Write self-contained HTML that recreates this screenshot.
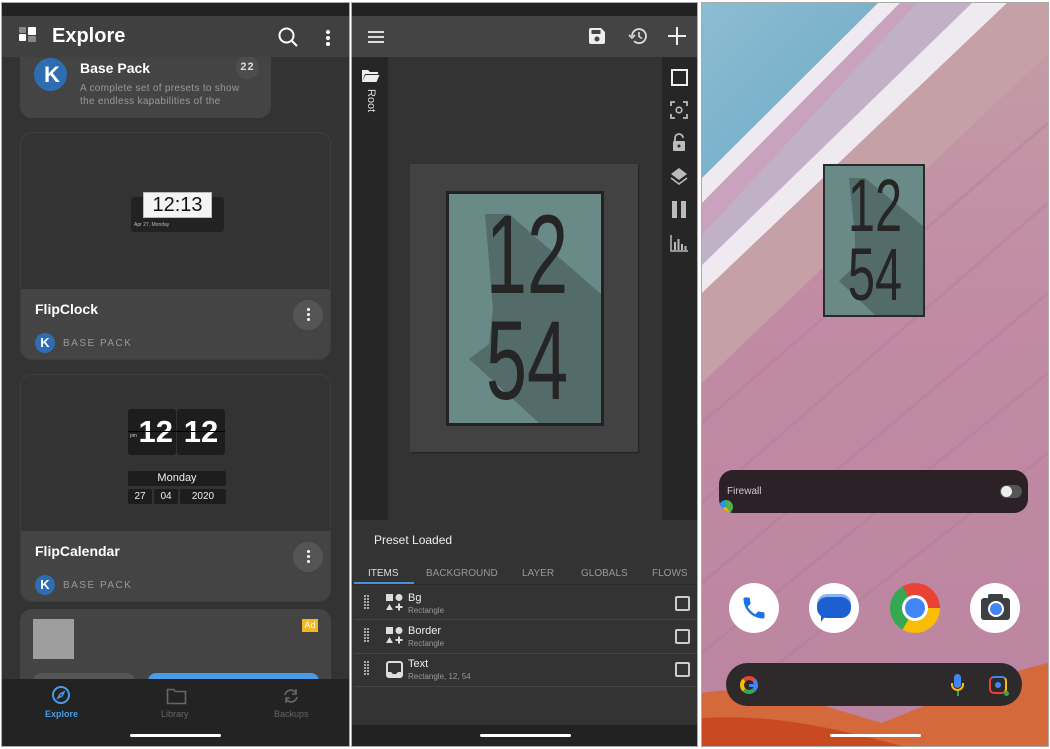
<!DOCTYPE html>
<html><head><meta charset="utf-8">
<style>
*{box-sizing:border-box;margin:0;padding:0}
body{width:1050px;height:749px;background:#fff;position:relative;overflow:hidden;font-family:"Liberation Sans",sans-serif}
.a{position:absolute}
.panel{position:absolute;top:3px;height:743px;overflow:hidden}
.t{position:absolute;white-space:nowrap}
</style></head><body>

<div class="a" style="left:1px;top:2px;width:349px;height:745px;border:1px solid #aaa"></div>
<div class="a" style="left:351px;top:2px;width:347px;height:745px;border:1px solid #aaa"></div>
<div class="a" style="left:701px;top:2px;width:348px;height:745px;border:1px solid #aaa"></div>

<!-- LEFT PANEL -->
<div class="panel" style="left:2px;width:347px;background:#333">
  <div class="a" style="left:0;top:0;width:347px;height:13px;background:#222"></div>
  <div class="a" style="left:18px;top:40px;width:251px;height:75px;background:#444;border-radius:12px"></div>
  <div class="a" style="left:0;top:13px;width:347px;height:41px;background:#404040;z-index:2">
    <div class="a" style="left:17px;top:18px;width:7px;height:7px;background:#fff;border-radius:1px"></div>
    <div class="a" style="left:17px;top:11px;width:7px;height:6px;background:#888;border-radius:1px"></div>
    <div class="a" style="left:26px;top:11px;width:8px;height:8px;background:#fff;border-radius:1px"></div>
    <div class="a" style="left:26px;top:20px;width:8px;height:6px;background:#888;border-radius:1px"></div>
    <div class="t" style="left:50px;top:9px;font-size:20px;font-weight:bold;color:#fff">Explore</div>
    <svg class="a" style="left:275px;top:10px" width="22" height="22" viewBox="0 0 22 22"><circle cx="9.5" cy="9.5" r="7" fill="none" stroke="#fff" stroke-width="2"/><line x1="14.5" y1="14.5" x2="20" y2="20" stroke="#fff" stroke-width="2"/></svg>
    <div class="a" style="left:324px;top:14px;width:4px;height:4px;border-radius:2px;background:#fff;box-shadow:0 6px 0 #fff,0 12px 0 #fff"></div>
  </div>
  <div class="a" style="left:32px;top:55px;width:33px;height:33px;border-radius:50%;background:#2f6db3"></div>
  <div class="t" style="left:42px;top:59px;font-size:22px;font-weight:bold;color:#fff">K</div>
  <div class="t" style="left:78px;top:57px;font-size:14px;font-weight:bold;color:#fff">Base Pack</div>
  <div class="a" style="left:234px;top:53px;width:23px;height:23px;border-radius:50%;background:#4d4d4d;color:#ddd;font-size:11px;font-weight:bold;text-align:center;line-height:23px;letter-spacing:1px">22</div>
  <div class="t" style="left:78px;top:79px;font-size:10px;color:#999;line-height:13px;letter-spacing:.3px">A complete set of presets to show<br>the endless kapabilities of the</div>

  <div class="a" style="left:18px;top:129px;width:311px;height:228px;border-radius:12px;overflow:hidden;background:#333;border:1px solid #3e3e3e">
    <div class="a" style="left:0;top:156px;width:311px;height:72px;background:#444"></div>
    <div class="a" style="left:110px;top:64px;width:93px;height:35px;background:#222;border-radius:3px"></div>
    <div class="a" style="left:122px;top:59px;width:69px;height:26px;background:#f4f4f4;border:1px solid #bbb;font-size:20px;color:#111;text-align:center;line-height:25px">12:13</div>
    <div class="t" style="left:113px;top:89px;font-size:5px;color:#bbb">Apr 27, Monday</div>
    <div class="t" style="left:14px;top:168px;font-size:14px;font-weight:bold;color:#fff">FlipClock</div>
    <div class="a" style="left:272px;top:167px;width:30px;height:30px;border-radius:50%;background:#555"></div>
    <div class="a" style="left:286px;top:175px;width:3px;height:3px;border-radius:2px;background:#fff;box-shadow:0 5px 0 #fff,0 10px 0 #fff"></div>
    <div class="a" style="left:14px;top:200px;width:20px;height:20px;border-radius:50%;background:#2f6db3;color:#fff;font-size:13px;font-weight:bold;text-align:center;line-height:20px">K</div>
    <div class="t" style="left:42px;top:205px;font-size:10px;color:#999;letter-spacing:1.5px">BASE PACK</div>
  </div>

  <div class="a" style="left:18px;top:371px;width:311px;height:228px;border-radius:12px;overflow:hidden;background:#333;border:1px solid #3e3e3e">
    <div class="a" style="left:0;top:156px;width:311px;height:72px;background:#444"></div>
    <div class="a" style="left:107px;top:34px;width:48px;height:46px;background:#1d1d1d;border-radius:3px;color:#fff;font-size:31px;font-weight:bold;text-align:right;padding-right:3px;line-height:46px">12</div>
    <div class="t" style="left:109px;top:58px;font-size:5px;color:#ccc">pm</div>
    <div class="a" style="left:156px;top:34px;width:48px;height:46px;background:#1d1d1d;border-radius:3px;color:#fff;font-size:31px;font-weight:bold;text-align:center;line-height:46px">12</div>
    <div class="a" style="left:107px;top:56px;width:97px;height:1px;background:#000"></div>
    <div class="a" style="left:107px;top:96px;width:98px;height:15px;background:#1d1d1d;border-radius:2px;color:#eee;font-size:11px;text-align:center;line-height:15px">Monday</div>
    <div class="a" style="left:107px;top:114px;width:24px;height:15px;background:#1d1d1d;border-radius:2px;color:#eee;font-size:10px;text-align:center;line-height:15px">27</div>
    <div class="a" style="left:133px;top:114px;width:24px;height:15px;background:#1d1d1d;border-radius:2px;color:#eee;font-size:10px;text-align:center;line-height:15px">04</div>
    <div class="a" style="left:159px;top:114px;width:46px;height:15px;background:#1d1d1d;border-radius:2px;color:#eee;font-size:10px;text-align:center;line-height:15px">2020</div>
    <div class="t" style="left:14px;top:168px;font-size:14px;font-weight:bold;color:#fff">FlipCalendar</div>
    <div class="a" style="left:272px;top:167px;width:30px;height:30px;border-radius:50%;background:#555"></div>
    <div class="a" style="left:286px;top:175px;width:3px;height:3px;border-radius:2px;background:#fff;box-shadow:0 5px 0 #fff,0 10px 0 #fff"></div>
    <div class="a" style="left:14px;top:200px;width:20px;height:20px;border-radius:50%;background:#2f6db3;color:#fff;font-size:13px;font-weight:bold;text-align:center;line-height:20px">K</div>
    <div class="t" style="left:42px;top:205px;font-size:10px;color:#999;letter-spacing:1.5px">BASE PACK</div>
  </div>

  <div class="a" style="left:18px;top:606px;width:311px;height:100px;border-radius:12px;background:#444"></div>
  <div class="a" style="left:31px;top:616px;width:41px;height:40px;background:#9e9e9e"></div>
  <div class="a" style="left:300px;top:616px;width:16px;height:13px;background:#f2b824;color:#fff;font-size:9px;text-align:center;line-height:13px">Ad</div>
  <div class="a" style="left:31px;top:670px;width:102px;height:20px;background:#555;border-radius:8px"></div>
  <div class="a" style="left:146px;top:670px;width:171px;height:20px;background:#4a9be8;border-radius:8px"></div>

  <div class="a" style="left:0;top:676px;width:347px;height:67px;background:#232323"></div>
  <svg class="a" style="left:49px;top:682px" width="20" height="20" viewBox="0 0 20 20"><circle cx="10" cy="10" r="8" fill="none" stroke="#4a9be8" stroke-width="2"/><path d="M13 7 L11 11 L7 13 L9 9 Z" fill="none" stroke="#4a9be8" stroke-width="1.5"/></svg>
  <div class="t" style="left:43px;top:706px;font-size:9px;font-weight:bold;color:#4a9be8">Explore</div>
  <svg class="a" style="left:164px;top:684px" width="21" height="18" viewBox="0 0 21 18"><path d="M1.5 2.5 h6 l2 2 h10 v12 h-18 z" fill="none" stroke="#666" stroke-width="1.6"/></svg>
  <div class="t" style="left:159px;top:706px;font-size:9px;color:#666">Library</div>
  <svg class="a" style="left:279px;top:684px" width="20" height="18" viewBox="0 0 20 18"><path d="M4 8 A6 6 0 0 1 15 6 M16 10 A6 6 0 0 1 5 12" fill="none" stroke="#666" stroke-width="1.8"/><path d="M15 2 v5 h-4" fill="none" stroke="#666" stroke-width="1.6"/><path d="M5 16 v-5 h4" fill="none" stroke="#666" stroke-width="1.6"/></svg>
  <div class="t" style="left:272px;top:706px;font-size:9px;color:#666">Backups</div>
  <div class="a" style="left:128px;top:731px;width:91px;height:3px;border-radius:2px;background:#fff"></div>
</div>

<!-- MIDDLE PANEL -->
<div class="panel" style="left:352px;width:345px;background:#333">
  <div class="a" style="left:0;top:0;width:345px;height:13px;background:#222"></div>
  <div class="a" style="left:0;top:13px;width:345px;height:41px;background:#444"></div>
  <div class="a" style="left:16px;top:28px;width:16px;height:2px;background:#ddd;box-shadow:0 5px 0 #ddd,0 10px 0 #ddd"></div>
  <svg class="a" style="left:236px;top:24px" width="18" height="18" viewBox="0 0 18 18"><path d="M1 3 a2 2 0 0 1 2-2 h10 l4 4 v10 a2 2 0 0 1 -2 2 h-12 a2 2 0 0 1 -2-2 z" fill="#eee"/><rect x="3.5" y="3" width="9" height="4" fill="#444"/><circle cx="9" cy="12" r="2.5" fill="#444"/></svg>
  <svg class="a" style="left:276px;top:24px" width="20" height="18" viewBox="0 0 20 18"><path d="M4 9 A7 7 0 1 1 6 14" fill="none" stroke="#ddd" stroke-width="1.8"/><path d="M1 8 l3 3 l3-3" fill="none" stroke="#ddd" stroke-width="1.6"/><path d="M11 5 v4.5 l3 2" fill="none" stroke="#ddd" stroke-width="1.6"/></svg>
  <div class="a" style="left:316px;top:32px;width:18px;height:2px;background:#eee"></div>
  <div class="a" style="left:324px;top:24px;width:2px;height:18px;background:#eee"></div>

  <div class="a" style="left:0;top:54px;width:36px;height:463px;background:#262626"></div>
  <svg class="a" style="left:10px;top:66px" width="18" height="14" viewBox="0 0 18 14"><path d="M0 1 h6 l2 2 h8 v2 h-13 l-3 8 z" fill="#eee"/><path d="M3.5 6 h14 l-3 7 h-14.5 z" fill="#eee"/></svg>
  <div class="t" style="top:86px;font-size:11px;color:#ddd;transform:rotate(90deg);transform-origin:0 0;left:25px">Root</div>
  <div class="a" style="left:310px;top:54px;width:35px;height:463px;background:#262626"></div>
  <div class="a" style="left:319px;top:66px;width:17px;height:17px;border:2px solid #eee"></div>
  <svg class="a" style="left:318px;top:98px" width="18" height="18" viewBox="0 0 18 18"><path d="M1 5 v-4 h4 M13 1 h4 v4 M17 13 v4 h-4 M5 17 h-4 v-4" fill="none" stroke="#bbb" stroke-width="1.8"/><circle cx="9" cy="9" r="2.8" fill="none" stroke="#bbb" stroke-width="1.6"/></svg>
  <svg class="a" style="left:320px;top:130px" width="14" height="18" viewBox="0 0 14 18"><path d="M3 8 v-3 a4 4 0 0 1 8 0" fill="none" stroke="#bbb" stroke-width="1.8"/><rect x="1" y="8" width="12" height="10" rx="1" fill="#bbb"/><circle cx="7" cy="13" r="1.5" fill="#262626"/></svg>
  <svg class="a" style="left:318px;top:164px" width="18" height="18" viewBox="0 0 18 18"><path d="M9 1 l8 6 l-8 6 l-8-6 z" fill="#bbb"/><path d="M1 11 l8 6 l8-6" fill="none" stroke="#bbb" stroke-width="1.6"/></svg>
  <div class="a" style="left:320px;top:198px;width:5px;height:17px;background:#bbb"></div>
  <div class="a" style="left:329px;top:198px;width:5px;height:17px;background:#bbb"></div>
  <svg class="a" style="left:318px;top:232px" width="18" height="17" viewBox="0 0 18 17"><path d="M1 0 v16 h17" fill="none" stroke="#bbb" stroke-width="1.5"/><rect x="4" y="7" width="2" height="8" fill="#bbb"/><rect x="7.5" y="4" width="2" height="11" fill="#bbb"/><rect x="11" y="9" width="2" height="6" fill="#bbb"/><rect x="14.5" y="11" width="2" height="4" fill="#bbb"/></svg>

  <div class="a" style="left:58px;top:161px;width:228px;height:288px;background:#424242;box-shadow:1px 1px 1px #222"></div>
  <div class="a" style="left:94px;top:188px;width:158px;height:235px;background:#222;padding:3px;overflow:hidden">
    <div style="position:relative;width:152px;height:229px;background:#6a8a88;overflow:hidden">
      <svg class="a" style="left:0;top:0" width="152" height="229" viewBox="0 0 152 229"><polygon points="36,20 60,20 152,100 152,229 90,229 20,165 40,150 44,115" fill="#4d6463" opacity=".8"/></svg>
      <div class="t" style="left:-8px;top:8px;width:172px;text-align:center;font-size:112px;color:#252525;line-height:106px;transform:scaleX(.66)">12<br>54</div>
    </div>
  </div>

  <div class="t" style="left:22px;top:530px;font-size:12px;color:#eee">Preset Loaded</div>
  <div class="t" style="left:16px;top:565px;font-size:10px;color:#ddd">ITEMS</div>
  <div class="t" style="left:74px;top:565px;font-size:10px;color:#999">BACKGROUND</div>
  <div class="t" style="left:170px;top:565px;font-size:10px;color:#999">LAYER</div>
  <div class="t" style="left:229px;top:565px;font-size:10px;color:#999">GLOBALS</div>
  <div class="t" style="left:300px;top:565px;font-size:10px;color:#999">FLOWS</div>
  <div class="a" style="left:2px;top:579px;width:60px;height:2px;background:#4a90d9"></div>
  <div class="a" style="left:2px;top:581px;width:343px;height:1px;background:#2a2a2a"></div>
  <div class="a" style="left:2px;top:616px;width:343px;height:1px;background:#444"></div>
  <div class="a" style="left:2px;top:650px;width:343px;height:1px;background:#444"></div>
  <div class="a" style="left:2px;top:683px;width:343px;height:1px;background:#444"></div>

  <div class="a" style="left:12px;top:592px;width:2px;height:2px;background:#aaa;box-shadow:3px 0 #aaa,0 3px #aaa,3px 3px #aaa,0 6px #aaa,3px 6px #aaa,0 9px #aaa,3px 9px #aaa,0 12px #aaa,3px 12px #aaa"></div>
  <div class="a" style="left:12px;top:625px;width:2px;height:2px;background:#aaa;box-shadow:3px 0 #aaa,0 3px #aaa,3px 3px #aaa,0 6px #aaa,3px 6px #aaa,0 9px #aaa,3px 9px #aaa,0 12px #aaa,3px 12px #aaa"></div>
  <div class="a" style="left:12px;top:658px;width:2px;height:2px;background:#aaa;box-shadow:3px 0 #aaa,0 3px #aaa,3px 3px #aaa,0 6px #aaa,3px 6px #aaa,0 9px #aaa,3px 9px #aaa,0 12px #aaa,3px 12px #aaa"></div>

  <svg class="a" style="left:34px;top:591px" width="18" height="17" viewBox="0 0 18 17"><rect x="0" y="0" width="7" height="7" fill="#ddd"/><circle cx="13" cy="3.5" r="3.5" fill="#ddd"/><path d="M3.5 10 l3.5 6 h-7 z" fill="#ddd"/><path d="M13 9.5 v7 M9.5 13 h7" stroke="#ddd" stroke-width="2"/></svg>
  <svg class="a" style="left:34px;top:624px" width="18" height="17" viewBox="0 0 18 17"><rect x="0" y="0" width="7" height="7" fill="#ddd"/><circle cx="13" cy="3.5" r="3.5" fill="#ddd"/><path d="M3.5 10 l3.5 6 h-7 z" fill="#ddd"/><path d="M13 9.5 v7 M9.5 13 h7" stroke="#ddd" stroke-width="2"/></svg>
  <svg class="a" style="left:34px;top:658px" width="17" height="17" viewBox="0 0 17 17"><rect x="1" y="1" width="15" height="15" rx="2" fill="none" stroke="#ddd" stroke-width="2"/><path d="M1 11 h4 l2 2 h3 l2-2 h4 v5 h-15z" fill="#ddd"/></svg>
  <div class="t" style="left:56px;top:589px;font-size:11px;color:#eee">Bg</div>
  <div class="t" style="left:56px;top:603px;font-size:8px;color:#999">Rectangle</div>
  <div class="t" style="left:56px;top:622px;font-size:11px;color:#eee">Border</div>
  <div class="t" style="left:56px;top:636px;font-size:8px;color:#999">Rectangle</div>
  <div class="t" style="left:56px;top:655px;font-size:11px;color:#eee">Text</div>
  <div class="t" style="left:56px;top:669px;font-size:8px;color:#999">Rectangle, 12, 54</div>
  <div class="a" style="left:323px;top:593px;width:15px;height:15px;border:2px solid #ccc;border-radius:2px"></div>
  <div class="a" style="left:323px;top:626px;width:15px;height:15px;border:2px solid #ccc;border-radius:2px"></div>
  <div class="a" style="left:323px;top:659px;width:15px;height:15px;border:2px solid #ccc;border-radius:2px"></div>

  <div class="a" style="left:0;top:722px;width:345px;height:21px;background:#222"></div>
  <div class="a" style="left:128px;top:731px;width:91px;height:3px;border-radius:2px;background:#fff"></div>
</div>

<!-- RIGHT PANEL -->
<div class="panel" style="left:702px;width:346px;background:#c08aa2">
  <svg class="a" style="left:0;top:0" width="346" height="743" viewBox="0 0 346 743">
    <defs>
      <linearGradient id="sky" x1="0" y1="0" x2="1" y2="1"><stop offset="0" stop-color="#8dbcd2"/><stop offset="1" stop-color="#6aa8c6"/></linearGradient>
      <linearGradient id="pk" x1="0" y1="0" x2="0" y2="1"><stop offset="0" stop-color="#c49ea6"/><stop offset=".4" stop-color="#c28ba4"/><stop offset="1" stop-color="#bb84a0"/></linearGradient>
    </defs>
    <rect width="346" height="743" fill="url(#pk)"/>
    <polygon points="0,0 176,0 0,175 " fill="url(#sky)"/>
    <polygon points="176,0 198,0 0,200 0,175" fill="#eeeaf0"/>
    <polygon points="198,0 270,0 0,262 0,200" fill="#c9a3be"/>
    <polygon points="215,0 270,0 0,262 0,232" fill="#c0b1c6"/>
    <polygon points="270,0 305,0 0,290 0,262" fill="#efeaf0"/>
    <polygon points="305,0 346,0 346,50 0,380 0,290" fill="#c6a0a7"/>
    <g stroke="#b0789a" stroke-width="3" fill="none" opacity=".35">
      <path d="M0 420 L346 120"/><path d="M0 500 L346 200"/><path d="M0 580 L346 290"/><path d="M0 650 L346 370"/><path d="M0 720 L346 450"/>
    </g>
    <path d="M0 690 C60 680 110 700 180 720 C230 700 300 670 346 660 L346 743 L0 743 Z" fill="#d46a3c"/>
    <path d="M0 715 C80 710 150 730 200 743 L0 743 Z" fill="#c94a22"/>
  </svg>
  <div class="a" style="left:121px;top:161px;width:102px;height:153px;background:#2a2a2a;padding:2px;overflow:hidden">
    <div style="position:relative;width:98px;height:149px;background:#6a8a88;overflow:hidden">
      <svg class="a" style="left:0;top:0" width="98" height="149" viewBox="0 0 98 149"><polygon points="24,12 40,12 98,60 98,149 50,149 14,115 30,100 30,70" fill="#4d6463" opacity=".8"/></svg>
      <div class="t" style="left:-9px;top:5px;width:118px;text-align:center;font-size:74px;color:#252525;line-height:69px;transform:scaleX(.66)">12<br>54</div>
    </div>
  </div>
  <div class="a" style="left:17px;top:467px;width:309px;height:43px;border-radius:14px;background:rgba(32,24,28,.92);overflow:hidden">
    <div class="a" style="left:0;top:30px;width:14px;height:14px;border-radius:50%;background:conic-gradient(#4caf50 0 40%,#f4b400 0 70%,#2196f3 0)"></div>
  </div>
  <div class="t" style="left:25px;top:483px;font-size:10px;color:#ccc">Firewall</div>
  <div class="a" style="left:298px;top:482px;width:22px;height:13px;border-radius:7px;background:#555"></div>
  <div class="a" style="left:299px;top:483px;width:11px;height:11px;border-radius:50%;background:#eee"></div>
  <div class="a" style="left:27px;top:580px;width:50px;height:50px;border-radius:50%;background:#fff"></div>
  <svg class="a" style="left:38px;top:591px" width="28" height="28" viewBox="0 0 24 24"><path d="M6.6 10.8c1.4 2.8 3.8 5.1 6.6 6.6l2.2-2.2c.3-.3.7-.4 1-.2 1.1.4 2.3.6 3.6.6.6 0 1 .4 1 1V20c0 .6-.4 1-1 1C10.6 21 3 13.4 3 4c0-.6.4-1 1-1h3.5c.6 0 1 .4 1 1 0 1.3.2 2.5.6 3.6.1.3 0 .7-.2 1z" fill="#1a73e8"/></svg>
  <div class="a" style="left:107px;top:580px;width:50px;height:50px;border-radius:50%;background:#fff"></div>
  <div class="a" style="left:115px;top:594px;width:34px;height:21px;border-radius:10px;background:#1b5fd0;box-shadow:0 -3px 0 #8ab4f8"></div>
  <div class="a" style="left:119px;top:612px;width:0;height:0;border-left:5px solid #1b5fd0;border-bottom:7px solid transparent"></div>
  <div class="a" style="left:188px;top:580px;width:50px;height:50px;border-radius:50%;background:conic-gradient(from -30deg,#ea4335 0 120deg,#fbbc05 120deg 240deg,#34a853 240deg 360deg)"></div>
  <div class="a" style="left:200px;top:592px;width:26px;height:26px;border-radius:50%;background:#fff"></div>
  <div class="a" style="left:203px;top:595px;width:20px;height:20px;border-radius:50%;background:#4285f4"></div>
  <div class="a" style="left:268px;top:580px;width:50px;height:50px;border-radius:50%;background:#fff"></div>
  <div class="a" style="left:279px;top:595px;width:29px;height:22px;border-radius:3px;background:#3c4043"></div>
  <div class="a" style="left:286px;top:591px;width:15px;height:5px;border-radius:2px;background:#3c4043"></div>
  <div class="a" style="left:286px;top:598px;width:16px;height:16px;border-radius:50%;background:#4285f4;border:2px solid #fff"></div>
  <div class="a" style="left:24px;top:660px;width:296px;height:43px;border-radius:22px;background:#2e2a2c"></div>
  <div class="a" style="left:38px;top:673px;width:18px;height:18px;border-radius:50%;border:4px solid;border-color:#ea4335 #4285f4 #34a853 #fbbc05"></div>
  <div class="a" style="left:47px;top:681px;width:9px;height:3px;background:#4285f4"></div>
  <div class="a" style="left:252px;top:671px;width:7px;height:14px;border-radius:4px;background:#4285f4"></div>
  <div class="a" style="left:249px;top:680px;width:13px;height:8px;border:2px solid #fbbc05;border-top:none;border-radius:0 0 7px 7px"></div>
  <div class="a" style="left:255px;top:688px;width:2px;height:5px;background:#34a853"></div>
  <div class="a" style="left:287px;top:673px;width:18px;height:18px;border-radius:5px;border:2.5px solid;border-color:#4285f4 #fbbc05 #ea4335 #ea4335"></div>
  <div class="a" style="left:293px;top:679px;width:6px;height:6px;border-radius:50%;background:#4285f4"></div>
  <div class="a" style="left:302px;top:688px;width:5px;height:5px;border-radius:50%;background:#34a853"></div>
  <div class="a" style="left:128px;top:731px;width:91px;height:3px;border-radius:2px;background:#fff"></div>
</div>
</body></html>
